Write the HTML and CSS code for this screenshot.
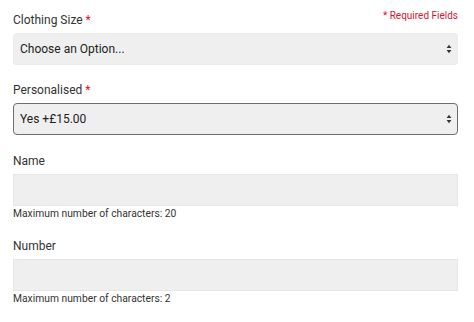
FILE: index.html
```html
<!DOCTYPE html>
<html>
<head>
<meta charset="utf-8">
<link rel="stylesheet" href="styles.css">
</head>
<body>
<form class="form">
  <div class="field field-first">
    <div class="label-row">
      <span class="label">Clothing Size <span class="req">*</span></span>
      <span class="req-note">* Required Fields</span>
    </div>
    <div class="select">
      <span>Choose an Option...</span>
      <svg class="arrows" width="6" height="10" viewBox="0 0 6 10"><path d="M3 0.8 L5.4 4 H0.6 Z M3 9.2 L5.4 6 H0.6 Z" fill="#333"/></svg>
    </div>
  </div>
  <div class="field">
    <div class="label-row"><span class="label">Personalised <span class="req">*</span></span></div>
    <div class="select select-active">
      <span>Yes +£15.00</span>
      <svg class="arrows" width="6" height="10" viewBox="0 0 6 10"><path d="M3 0.8 L5.4 4 H0.6 Z M3 9.2 L5.4 6 H0.6 Z" fill="#333"/></svg>
    </div>
  </div>
  <div class="field field-text">
    <div class="label-row"><span class="label">Name</span></div>
    <div class="input"></div>
    <div class="note">Maximum number of characters: 20</div>
  </div>
  <div class="field field-text">
    <div class="label-row"><span class="label">Number</span></div>
    <div class="input"></div>
    <div class="note">Maximum number of characters: 2</div>
  </div>
</form>
</body>
</html>
```
FILE: styles.css
```css
html, body { margin: 0; padding: 0; background: #fff; }
body { font-family: Roboto, "Liberation Sans", sans-serif; color: #333; }
.form { padding: 0 16px 0 13px; display: flex; flex-direction: column; }
.field { margin-top: 18px; }
.field-first { margin-top: 13px; }
.field-text { margin-top: 19px; }
.label-row { display: flex; justify-content: space-between; align-items: flex-start; height: 14px; line-height: 14px; margin-bottom: 6px; }
.label { font-size: 12px; color: #333; }
.req { color: #e0102c; }
.req-note { font-size: 10px; color: #e0102c; line-height: 10px; margin-top: -2px; }
.select { box-sizing: border-box; height: 32px; background: #efefef; border-radius: 3px; display: flex; align-items: center; justify-content: space-between; padding: 0 5px 0 6px; font-size: 12px; color: #222; border: 1px solid #ececec; }
.select-active { border: 1px solid #6e6e6e; border-radius: 4px; }
.input { box-sizing: border-box; height: 32px; background: #efefef; border: 1px solid #e6e6e6; }
.note { font-size: 10.3px; color: #333; margin-top: 2px; line-height: 12px; }
```
